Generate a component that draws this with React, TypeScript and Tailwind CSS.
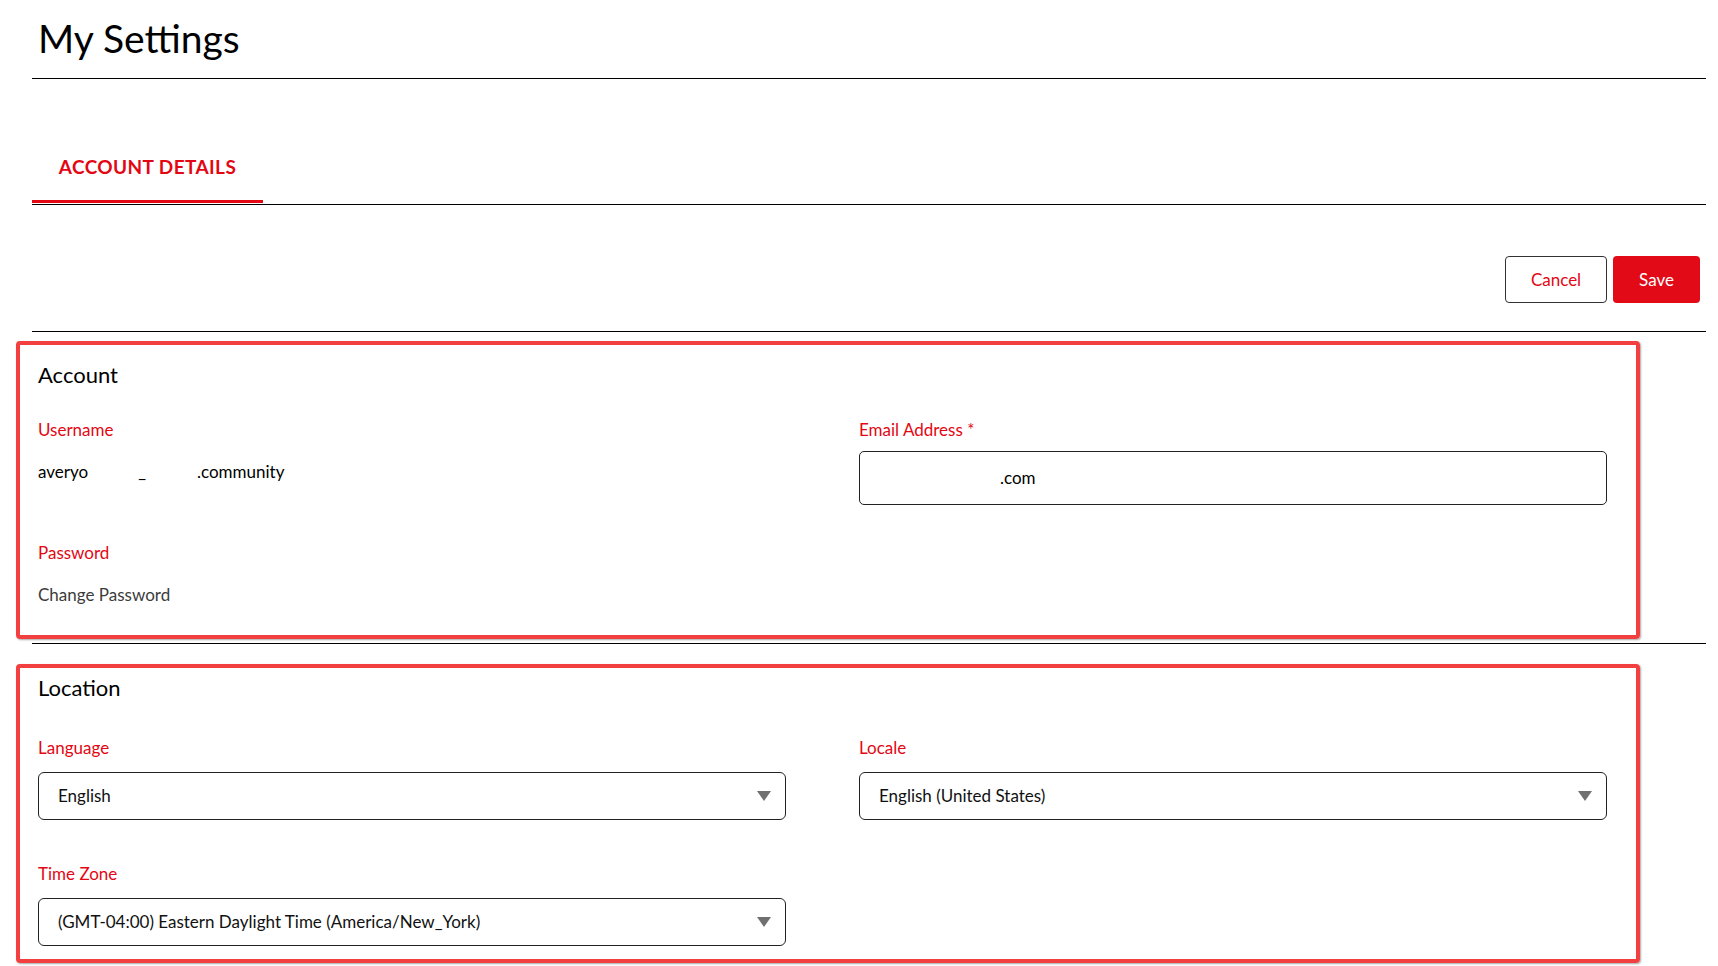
import React from "react";

const Arrow = () => (
  <svg width="14" height="10" viewBox="0 0 14 10" className="shrink-0">
    <polygon points="0,0 14,0 7,10" fill="#707070" />
  </svg>
);

const Select = ({ value }: { value: string }) => (
  <div className="h-[48px] w-full rounded-[6px] border border-[#222] flex items-center justify-between pl-[19px] pr-[14px] text-[17px] leading-[24px] text-[#111]">
    <span>{value}</span>
    <Arrow />
  </div>
);

const Label = ({ children }: { children: React.ReactNode }) => (
  <div className="text-[17px] leading-[24px] text-[#e30613]">{children}</div>
);

export default function App() {
  return (
    <div
      className="w-[1718px] h-[966px] overflow-hidden bg-white text-black"
      style={{ fontFamily: "Lato, 'Open Sans', sans-serif" }}
    >
      {/* Header */}
      <div className="ml-[32px] mr-[12px] h-[79px] border-b border-black pt-[14px] pl-[6px]">
        <h1 className="text-[39px] leading-[48px] font-normal text-black">My Settings</h1>
      </div>

      {/* Tabs */}
      <div className="ml-[32px] mr-[12px] mt-[51px] border-b border-black flex">
        <div className="w-[231px] h-[73px] mb-[1px] border-b-[3px] border-[#e30613] flex items-center justify-center pt-[4px]">
          <span className="text-[19px] leading-[24px] font-bold tracking-[0.4px] text-[#e30613]">ACCOUNT DETAILS</span>
        </div>
      </div>

      {/* Actions */}
      <div className="ml-[32px] mr-[12px] pt-[51px] pb-[28px] pr-[6px] border-b border-black flex justify-end gap-[6px]">
        <button className="w-[102px] h-[47px] rounded-[4px] border border-[#333] bg-white text-[17px] text-[#e30613] flex items-center justify-center">
          Cancel
        </button>
        <button className="w-[87px] h-[47px] rounded-[4px] bg-[#e20a17] text-[17px] text-white flex items-center justify-center">
          Save
        </button>
      </div>

      {/* Account box */}
      <div className="ml-[16px] mt-[9px] w-[1624px] h-[298px] border-[4px] border-[#f23f3f] rounded-[4px] shadow-[1px_1px_2px_rgba(0,0,0,0.35)] pl-[18px] pt-[16px]">
        <div className="text-[22px] leading-[28px] text-black">Account</div>
        <div className="mt-[29px] grid grid-cols-[748px_748px] gap-x-[73px]">
          <div className="flex flex-col">
            <Label>Username</Label>
            <div className="mt-[18px] text-[17px] leading-[24px] text-black flex">
              <span>averyo</span>
              <span className="ml-[50px]">_</span>
              <span className="ml-[51px]">.community</span>
            </div>
          </div>
          <div className="flex flex-col">
            <Label>Email Address *</Label>
            <div className="mt-[9px] h-[54px] rounded-[5px] border border-[#222] flex items-center pl-[140px] text-[17px] leading-[24px] text-black">
              .com
            </div>
          </div>
          <div className="flex flex-col mt-[36px]">
            <Label>Password</Label>
            <div className="mt-[18px] text-[17px] leading-[24px] text-[#3c3c3c]">Change Password</div>
          </div>
        </div>
      </div>

      {/* Divider */}
      <div className="ml-[32px] mr-[12px] mt-[4px] border-b border-black" />

      {/* Location box */}
      <div className="ml-[16px] mt-[20px] w-[1624px] h-[299px] border-[4px] border-[#f23f3f] rounded-[4px] shadow-[1px_1px_2px_rgba(0,0,0,0.35)] pl-[18px] pt-[6px]">
        <div className="text-[22px] leading-[28px] text-black">Location</div>
        <div className="mt-[34px] grid grid-cols-[748px_748px] gap-x-[73px]">
          <div className="flex flex-col">
            <Label>Language</Label>
            <div className="mt-[12px]">
              <Select value="English" />
            </div>
          </div>
          <div className="flex flex-col">
            <Label>Locale</Label>
            <div className="mt-[12px]">
              <Select value="English (United States)" />
            </div>
          </div>
          <div className="flex flex-col mt-[42px]">
            <Label>Time Zone</Label>
            <div className="mt-[12px]">
              <Select value="(GMT-04:00) Eastern Daylight Time (America/New_York)" />
            </div>
          </div>
        </div>
      </div>
    </div>
  );
}
